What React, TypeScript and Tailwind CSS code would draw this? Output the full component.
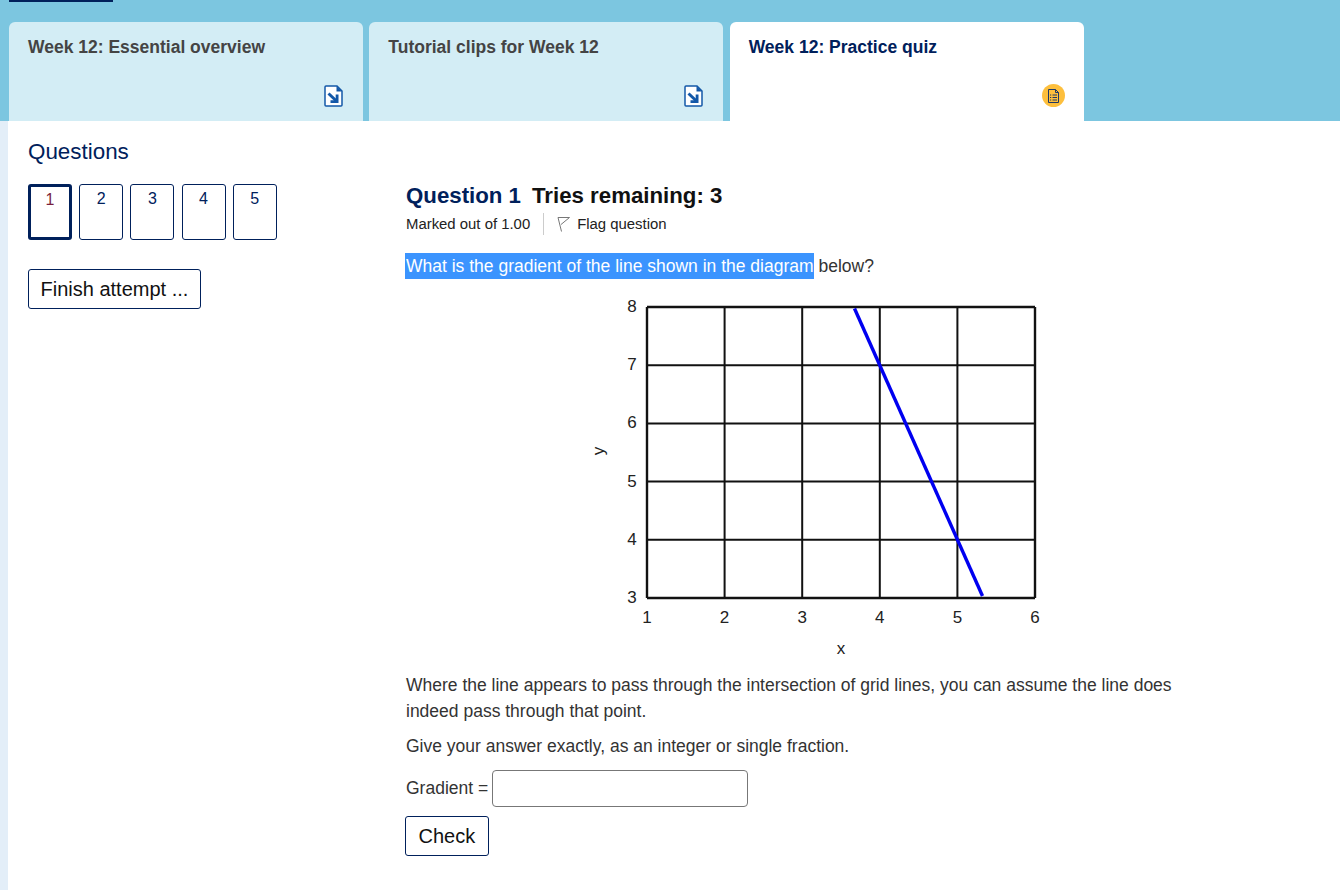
import React from "react";

const tabs = [
  { title: "Week 12: Essential overview", active: false },
  { title: "Tutorial clips for Week 12", active: false },
  { title: "Week 12: Practice quiz", active: true },
];

function LinkIcon() {
  return (
    <svg width="19" height="22" viewBox="0 0 19 22">
      <path d="M1 2a1 1 0 0 1 1-1h11l5 5v14a1 1 0 0 1-1 1H2a1 1 0 0 1-1-1z" fill="#fff" stroke="#1358a8" strokeWidth="1.5" />
      <path d="M12.5 1v5.5H18z" fill="#1358a8" />
      <path d="M4.5 8.5l8 7.5" fill="none" stroke="#1358a8" strokeWidth="3" />
      <path d="M14.5 9.5v8.5H6.5v-2.8h5.2V9.5z" fill="#1358a8" />
    </svg>
  );
}

function QuizIcon() {
  return (
    <div className="flex h-[23px] w-[23px] items-center justify-center rounded-full bg-[#fdbf3d]">
      <svg width="11" height="14" viewBox="0 0 11 14" fill="none" stroke="#1f3864" strokeWidth="1">
        <path d="M.5.5h7l3 3v10h-10z" />
        <path d="M7.5.5v3h3M4.5 6h4.5M4.5 8.5h4.5M4.5 11h4.5M2 6h1.2M2 8.5h1.2M2 11h1.2" />
      </svg>
    </div>
  );
}

function Chart() {
  const xs = [647, 724.6, 802.2, 879.8, 957.4, 1035];
  const ys = [307, 365.2, 423.4, 481.6, 539.8, 598];
  return (
    <svg width="470" height="365" viewBox="590 295 470 365" className="block" style={{ fontFamily: '"Liberation Sans", Arial, sans-serif' }}>
      {xs.map((x) => (
        <line key={x} x1={x} x2={x} y1="307" y2="598" stroke="#111" strokeWidth={x === 647 || x === 1035 ? 2.4 : 2} />
      ))}
      {ys.map((y) => (
        <line key={y} x1="647" x2="1035" y1={y} y2={y} stroke="#111" strokeWidth={y === 307 || y === 598 ? 2.4 : 2} />
      ))}
      <line x1="854.5" y1="308.5" x2="982.5" y2="596" stroke="#0000f0" strokeWidth="3.4" />
      {[8, 7, 6, 5, 4, 3].map((n, i) => (
        <text key={n} x="632" y={ys[i] + 5} fontSize="17" fill="#222" textAnchor="middle">{n}</text>
      ))}
      {[1, 2, 3, 4, 5, 6].map((n, i) => (
        <text key={n} x={xs[i]} y="623" fontSize="17" fill="#222" textAnchor="middle">{n}</text>
      ))}
      <text x="841" y="654" fontSize="17" fill="#222" textAnchor="middle">x</text>
      <text x="0" y="0" fontSize="17" fill="#222" textAnchor="middle" transform="translate(604 451) rotate(-90)">y</text>
    </svg>
  );
}

export default function App() {
  return (
    <div className="min-h-[890px] overflow-hidden bg-white font-['Liberation_Sans',Arial,sans-serif] text-[17.5px] text-[#333]">
      {/* Tabs */}
      <div className="relative flex h-[121px] items-end gap-[6.33px] bg-[#7cc6e0] pl-[9px]">
        <div className="absolute left-[9px] top-0 h-[2px] w-[104px] bg-[#00205b]" />
        {tabs.map((tab) => (
          <div
            key={tab.title}
            className={`flex h-[99px] w-[354px] flex-col justify-between rounded-t-[6px] pb-[14px] pl-[19px] pt-[14px] ${tab.active ? "bg-white pr-[19px]" : "bg-[#d3edf5] pr-[20px]"}`}
          >
            <div className={`text-[17.5px] font-bold leading-[22px] ${tab.active ? "text-[#00205b]" : "text-[#444]"}`}>{tab.title}</div>
            <div className="flex justify-end">{tab.active ? <QuizIcon /> : <LinkIcon />}</div>
          </div>
        ))}
      </div>

      <div className="flex">
        <div className="min-h-[769px] w-[8px] shrink-0 bg-[#e3eef8]" />
        {/* Sidebar */}
        <div className="w-[398px] shrink-0 pl-[20px]">
          <h2 className="mt-[17px] text-[22.4px] font-normal leading-[27px] text-[#00205b]">Questions</h2>
          <div className="mt-[19px] flex gap-[7.2px]">
            {[1, 2, 3, 4, 5].map((n) => (
              <div
                key={n}
                className={`h-[56px] w-[44px] rounded-[3px] text-center text-[16px] leading-[26px] ${n === 1 ? "border-[3px] border-[#00205b] text-[#7a1f3d]" : "border border-[#00205b] pt-[1px] text-[#00205b]"}`}
              >
                {n}
              </div>
            ))}
          </div>
          <button className="mt-[29px] block h-[40px] rounded-[3px] border border-[#00205b] bg-white px-[11.5px] text-[20px] text-[#111]">
            Finish attempt ...
          </button>
        </div>

        {/* Question */}
        <div className="flex-1">
          <div className="mt-[61px] flex gap-[11px] text-[22.25px] font-bold leading-[27px]">
            <span className="text-[#00205b]">Question 1</span>
            <span className="text-[#111]">Tries remaining: 3</span>
          </div>
          <div className="mt-[4px] flex h-[22px] items-center text-[14.9px] text-[#222]">
            <span>Marked out of 1.00</span>
            <span className="mx-[13px] h-[22px] w-px bg-[#ccc]" />
            <svg width="13" height="16" viewBox="0 0 13 16" className="mr-[7px]" fill="none" stroke="#777" strokeWidth="1">
              <path d="M1 1.5l3.5 14M1 1.5h11.5l-8.5 7" />
            </svg>
            <span>Flag question</span>
          </div>
          <p className="mt-[18px] leading-[26px]">
            <span className="-ml-[1px] inline-block bg-[#3b94fe] pl-[1px] text-white">What is the gradient of the line shown in the diagram</span> below?
          </p>
          <div className="ml-[184px] mt-[16px]">
            <Chart />
          </div>
          <p className="mt-[12px] w-[790px] leading-[26px]">
            Where the line appears to pass through the intersection of grid lines, you can assume the line does indeed pass through that point.
          </p>
          <p className="mt-[9px] leading-[26px]">Give your answer exactly, as an integer or single fraction.</p>
          <div className="mt-[11px] flex items-center gap-[4px]">
            <span>Gradient =</span>
            <input className="h-[37px] w-[256px] rounded-[4px] border border-[#777] bg-white" />
          </div>
          <button className="-ml-[1px] mt-[9px] block h-[40px] rounded-[3px] border border-[#00205b] bg-white px-[12.5px] text-[20px] text-[#111]">
            Check
          </button>
        </div>
      </div>
    </div>
  );
}
